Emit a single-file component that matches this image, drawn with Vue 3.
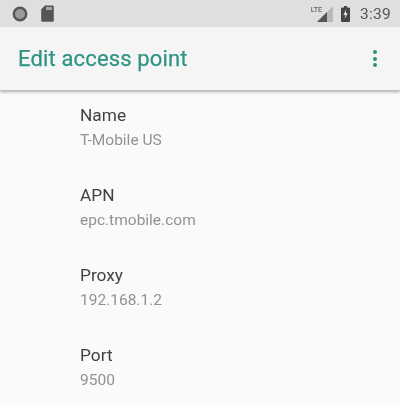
<script setup>
const rows = [
  { title: 'Name', value: 'T-Mobile US' },
  { title: 'APN', value: 'epc.tmobile.com' },
  { title: 'Proxy', value: '192.168.1.2' },
  { title: 'Port', value: '9500' },
]
</script>

<template>
  <div class="screen">
    <div class="status">
      <div class="left">
        <svg class="ring" width="16" height="16" viewBox="0 0 16 16">
          <circle cx="8" cy="8" r="6.2" fill="#9a9a9a" stroke="#555" stroke-width="2.4" />
        </svg>
        <svg class="sd" width="13" height="17" viewBox="0 0 13 17">
          <path d="M4 0.500H11.500A1.300 1.300 0 0 1 12.800 1.800V15.500A1.300 1.300 0 0 1 11.500 16.800H1.500A1.300 1.300 0 0 1 0.200 15.500V4.300z" fill="#555" />
          <path d="M5 2h6v3H5z" fill="#a5a5a5" />
        </svg>
      </div>
      <div class="right">
        <div class="signal">
          <span class="lte">LTE</span>
          <svg width="16" height="16" viewBox="0 0 16 16">
            <path d="M16 0V16H0z" fill="#b9b9b9" />
            <path d="M10 6V16H0z" fill="#555" />
          </svg>
        </div>
        <svg class="battery" width="9" height="16" viewBox="0 0 9 16">
          <path d="M3 0h3v1.500H8a1 1 0 0 1 1 1V15a1 1 0 0 1-1 1H1a1 1 0 0 1-1-1V2.500a1 1 0 0 1 1-1h2z" fill="#444" />
          <path d="M5.300 3.300 2.300 9h2L3.700 13l3-6H4.800z" fill="#e6e6e6" />
        </svg>
        <span class="time">3:39</span>
      </div>
    </div>
    <header class="bar">
      <h1>Edit access point</h1>
      <div class="menu"><i></i><i></i><i></i></div>
    </header>
    <main class="list">
      <div v-for="row in rows" :key="row.title" class="row">
        <div class="title">{{ row.title }}</div>
        <div class="value">{{ row.value }}</div>
      </div>
    </main>
  </div>
</template>

<style scoped>
.screen {
  width: 400px;
  height: 405px;
  overflow: hidden;
  background: #fafafa;
  font-family: Roboto, "Noto Sans", sans-serif;
  display: flex;
  flex-direction: column;
  filter: blur(0.35px);
}
.status {
  height: 27px;
  flex: none;
  background: #dfdfdf;
  display: flex;
  justify-content: space-between;
  align-items: center;
  padding: 0 9px 0 12px;
  box-sizing: border-box;
}
.left {
  display: flex;
  align-items: center;
  gap: 13px;
}
.right {
  display: flex;
  align-items: center;
}
.signal {
  position: relative;
  width: 20px;
  height: 16px;
  display: flex;
  justify-content: flex-end;
  margin-right: 8px;
}
.lte {
  position: absolute;
  left: -3px;
  top: -1px;
  font-size: 8px;
  line-height: 9px;
  font-weight: 500;
  color: #666;
  transform: scaleX(0.9);
}
.battery {
  margin-right: 10px;
}
.time {
  font-size: 15.500px;
  color: #555;
  letter-spacing: 0.3px;
}
.bar {
  height: 63px;
  flex: none;
  background: #f5f5f5;
  display: flex;
  align-items: center;
  justify-content: space-between;
  padding: 0 23px 0 18px;
  box-sizing: border-box;
  box-shadow: 0 2px 3px rgba(0, 0, 0, 0.3);
  position: relative;
}
h1 {
  margin: 0;
  font-size: 22px;
  font-weight: 400;
  letter-spacing: 0.15px;
  -webkit-text-stroke: 0.25px #2f9483;
  color: #2f9483;
}
.menu {
  display: flex;
  flex-direction: column;
  gap: 2.500px;
}
.menu i {
  width: 4px;
  height: 4px;
  border-radius: 50%;
  background: #2f8f7f;
}
.list {
  padding: 12px 0 0 80px;
  display: flex;
  flex-direction: column;
  gap: 27px;
}
.row {
  height: 53px;
}
.title {
  font-size: 17.300px;
  line-height: 26px;
  color: #424242;
}
.value {
  font-size: 15.500px;
  line-height: 25px;
  color: #929292;
}
</style>
